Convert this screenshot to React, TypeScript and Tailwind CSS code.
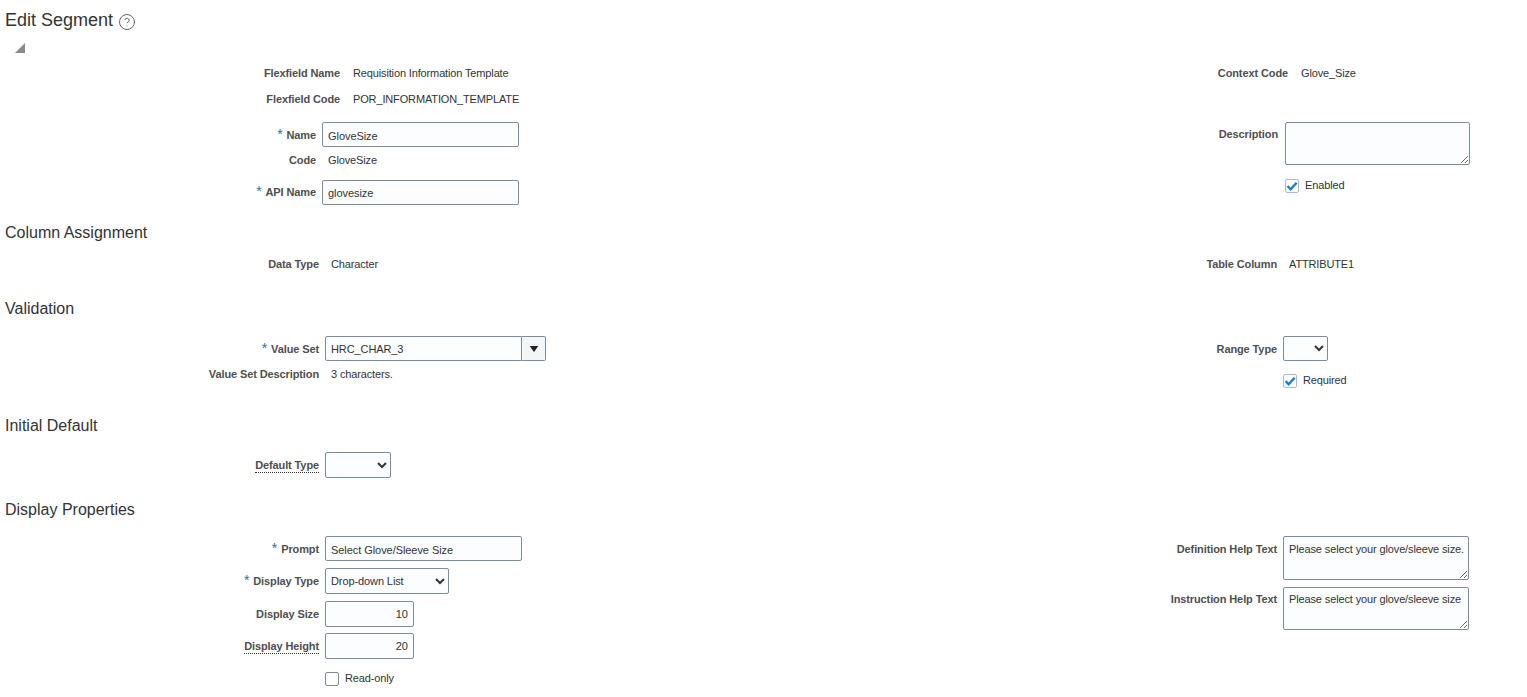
import React from "react";
import { CircleHelp } from "lucide-react";

function Label({ text, req, dotted, className }: { text: string; req?: boolean; dotted?: boolean; className: string }) {
  return (
    <div className={`shrink-0 text-right font-bold text-[#4f4f4f] text-[11px] tracking-[-0.11px] ${className}`}>
      {req && <span className="text-[#1f6fa8] font-normal text-[14px] leading-none mr-[4px]">*</span>}
      <span className={dotted ? "border-b border-dotted border-[#333] pb-px" : ""}>{text}</span>
    </div>
  );
}

function Value({ text, className }: { text: string; className: string }) {
  return <div className={`text-[11px] text-[#333] tracking-[-0.14px] ${className}`}>{text}</div>;
}

const boxCls = "border border-[#7b8d9b] rounded-[2px] bg-[#fcfdfe] text-[11px] text-[#333] outline-none";

function Text({ value, className }: { value: string; className: string }) {
  return <input readOnly value={value} className={`${boxCls} tracking-[-0.06px] h-[25px] px-[5px] ${className}`} />;
}

function Area({ value, className }: { value: string; className: string }) {
  return <textarea readOnly value={value} className={`${boxCls} tracking-[-0.13px] pl-[5px] pr-0 leading-[14px] resize-y block ${className}`} />;
}

function Sel({ value, className }: { value: string; className: string }) {
  return (
    <select defaultValue={value} className={`${boxCls} tracking-[-0.1px] pl-[1px] ${className}`}>
      <option value={value}>{value}</option>
    </select>
  );
}

function Check({ checked, label, className }: { checked?: boolean; label: string; className: string }) {
  return (
    <div className={`flex items-center h-[16px] ${className}`}>
      <span className={`flex items-center justify-center w-[14px] h-[14px] border rounded-[2px] bg-white ${checked ? "border-[#a9bccb]" : "border-[#7b8d9b]"}`}>
        {checked && (
          <svg viewBox="0 0 14 14" className="w-[12px] h-[12px]">
            <path d="M1.8 7 L5.4 10.8 L12.4 3.2" fill="none" stroke="#1a7ad0" strokeWidth="2.8" />
          </svg>
        )}
      </span>
      <span className="ml-[6px] pb-[2px] text-[11px] text-[#333] tracking-[-0.14px]">{label}</span>
    </div>
  );
}

function Heading({ text, className }: { text: string; className: string }) {
  return <h2 className={`h-[26px] leading-[26px] pl-[5px] text-[16px] text-[#333] ${className}`}>{text}</h2>;
}

const leftCol = "w-[1150px] shrink-0";

export default function App() {
  return (
    <div className="w-[1527px] h-[697px] overflow-hidden bg-white text-[#333] font-['Liberation_Sans',Arial,sans-serif]">
      <div className="flex items-center h-[40px] pl-[5px]">
        <h1 className="text-[18px] text-[#333] leading-none">Edit Segment</h1>
        <CircleHelp className="ml-[5px] mt-[3px] w-[18px] h-[18px] text-[#444]" strokeWidth={1.1} />
      </div>
      <div className="h-[20px] pl-[15px] pt-[3px]">
        <svg viewBox="0 0 10 10" className="w-[10px] h-[10px]">
          <polygon points="10,0 10,10 0,10" fill="#8a8a8a" />
        </svg>
      </div>

      <section className="flex">
        <div className={leftCol}>
          <div className="flex items-center h-[26px]">
            <Label text="Flexfield Name" className="w-[340px]" />
            <Value text="Requisition Information Template" className="ml-[13px]" />
          </div>
          <div className="flex items-center h-[26px]">
            <Label text="Flexfield Code" className="w-[340px]" />
            <Value text="POR_INFORMATION_TEMPLATE" className="ml-[13px]" />
          </div>
          <div className="flex items-center mt-[10px]">
            <Label text="Name" req className="w-[316px] pt-[2px]" />
            <Text value="GloveSize" className="ml-[6px] w-[197px] pt-[2px]" />
          </div>
          <div className="flex items-center h-[26px]">
            <Label text="Code" className="w-[316px]" />
            <Value text="GloveSize" className="ml-[12px]" />
          </div>
          <div className="flex items-center mt-[7px]">
            <Label text="API Name" req className="w-[316px]" />
            <Text value="glovesize" className="ml-[6px] w-[197px]" />
          </div>
        </div>
        <div className="flex-1">
          <div className="flex items-center h-[26px]">
            <Label text="Context Code" className="w-[138px]" />
            <Value text="Glove_Size" className="ml-[13px]" />
          </div>
          <div className="flex items-start mt-[36px]">
            <Label text="Description" className="w-[128px] pt-[4px]" />
            <Area value="" className="ml-[7px] w-[185px] h-[43px]" />
          </div>
          <Check checked label="Enabled" className="ml-[135px] mt-[13px]" />
        </div>
      </section>

      <Heading text="Column Assignment" className="mt-[15px]" />
      <section className="flex mt-[5px]">
        <div className={`${leftCol} flex items-center h-[26px]`}>
          <Label text="Data Type" className="w-[319px]" />
          <Value text="Character" className="ml-[12px]" />
        </div>
        <div className="flex-1 flex items-center h-[26px]">
          <Label text="Table Column" className="w-[127px]" />
          <Value text="ATTRIBUTE1" className="ml-[12px]" />
        </div>
      </section>

      <Heading text="Validation" className="mt-[19px]" />
      <section className="flex mt-[14px]">
        <div className={leftCol}>
          <div className="flex items-center">
            <Label text="Value Set" req className="w-[319px] pt-[2px]" />
            <div className="ml-[6px] flex w-[221px] h-[25px]">
              <input readOnly value="HRC_CHAR_3" className={`${boxCls} tracking-[-0.1px] flex-1 min-w-0 px-[5px] pt-[2px] rounded-r-none`} />
              <div className="w-[24px] flex items-center justify-center border border-l-0 border-[#7b8d9b] rounded-r-[2px] bg-[#f3f5f6]">
                <svg viewBox="0 0 10 7" className="w-[10px] h-[6px]">
                  <polygon points="0,0 10,0 5,7" fill="#222" />
                </svg>
              </div>
            </div>
          </div>
          <div className="flex items-center h-[26px]">
            <Label text="Value Set Description" className="w-[319px]" />
            <Value text="3 characters." className="ml-[12px]" />
          </div>
        </div>
        <div className="flex-1">
          <div className="flex items-center">
            <Label text="Range Type" className="w-[127px] pt-[2px]" />
            <Sel value="" className="ml-[6px] w-[45px] h-[25px]" />
          </div>
          <Check checked label="Required" className="ml-[133px] mt-[12px]" />
        </div>
      </section>

      <Heading text="Initial Default" className="mt-[24px]" />
      <div className="flex items-center mt-[13px]">
        <Label text="Default Type" dotted className="w-[319px]" />
        <Sel value="" className="ml-[6px] w-[66px] h-[26px]" />
      </div>

      <Heading text="Display Properties" className="mt-[19px]" />
      <section className="flex mt-[13px]">
        <div className={leftCol}>
          <div className="flex items-center">
            <Label text="Prompt" req className="w-[319px] pt-[2px]" />
            <Text value="Select Glove/Sleeve Size" className="ml-[6px] w-[197px] pt-[2px]" />
          </div>
          <div className="flex items-center mt-[7px]">
            <Label text="Display Type" req className="w-[319px]" />
            <Sel value="Drop-down List" className="ml-[6px] w-[124px] h-[26px]" />
          </div>
          <div className="flex items-center mt-[7px]">
            <Label text="Display Size" className="w-[319px]" />
            <input readOnly value="10" className={`${boxCls} ml-[6px] w-[89px] h-[26px] px-[5px] text-right`} />
          </div>
          <div className="flex items-center mt-[6px]">
            <Label text="Display Height" dotted className="w-[319px]" />
            <input readOnly value="20" className={`${boxCls} ml-[6px] w-[89px] h-[26px] px-[5px] text-right`} />
          </div>
          <Check label="Read-only" className="ml-[325px] mt-[12px]" />
        </div>
        <div className="flex-1">
          <div className="flex items-start">
            <Label text="Definition Help Text" className="w-[127px] pt-[5px]" />
            <Area value="Please select your glove/sleeve size." className="ml-[6px] w-[186px] h-[44px] pt-[5px]" />
          </div>
          <div className="flex items-start mt-[7px]">
            <Label text="Instruction Help Text" className="w-[127px] pt-[4px]" />
            <Area value="Please select your glove/sleeve size" className="ml-[6px] w-[186px] h-[43px] pt-[4px]" />
          </div>
        </div>
      </section>
    </div>
  );
}
